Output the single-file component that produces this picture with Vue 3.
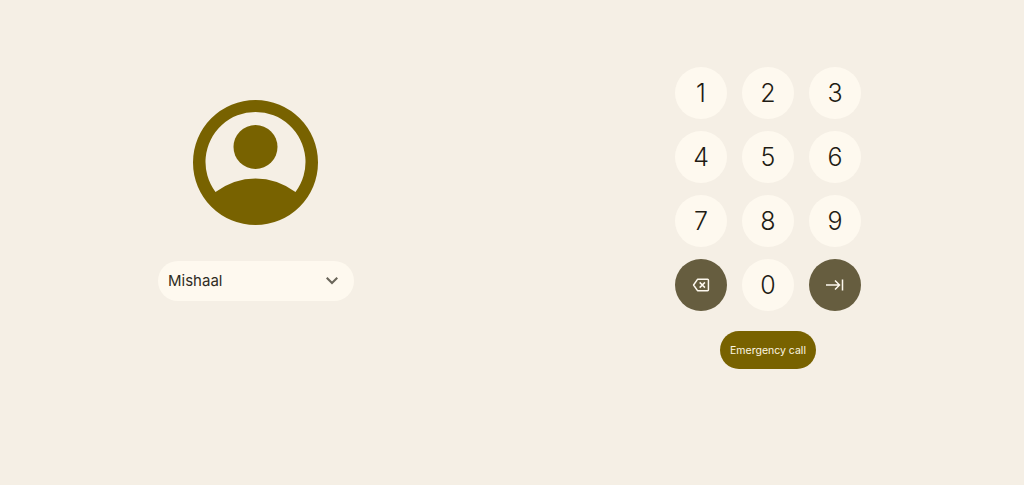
<script setup>
const keys = ['1','2','3','4','5','6','7','8','9']
</script>

<template>
  <main class="screen">
    <section class="left">
      <svg class="avatar" viewBox="0 0 125 125" aria-label="User avatar">
        <path fill="#786200" fill-rule="evenodd" d="M62.5 0a62.5 62.5 0 1 0 0 125a62.5 62.5 0 1 0 0-125z M22.5 92A50 50 0 1 1 102.5 92Q84 78.5 62.5 78.5Q41 78.5 22.5 92z" />
        <circle cx="62.5" cy="47" r="22" fill="#786200" />
      </svg>
      <div class="select">
        <span>Mishaal</span>
        <svg class="chev" viewBox="0 0 16 10"><path d="M2 1.8l6 6 6-6" fill="none" stroke="#6a665a" stroke-width="2.4" /></svg>
      </div>
    </section>
    <section class="right">
      <div class="pad">
        <button v-for="k in keys" :key="k" class="key">{{ k }}</button>
        <button class="key dark" aria-label="Backspace">
          <svg class="icon" viewBox="0 0 20 16">
            <path d="M6 1.5h11.5a1 1 0 0 1 1 1v11a1 1 0 0 1-1 1H6L1.5 8z" fill="none" stroke="#fef9ef" stroke-width="1.7" stroke-linejoin="round"/>
            <path d="M8.5 5l6 6M14.5 5l-6 6" fill="none" stroke="#fef9ef" stroke-width="1.7"/>
          </svg>
        </button>
        <button class="key">0</button>
        <button class="key dark" aria-label="Enter">
          <svg class="icon wide" viewBox="0 0 18 12">
            <path d="M0 6h13M9 1.5L13.5 6 9 10.5M16.5 0.5v11" fill="none" stroke="#fef9ef" stroke-width="1.5"/>
          </svg>
        </button>
      </div>
      <button class="call">Emergency call</button>
    </section>
  </main>
</template>

<style scoped>
.screen {
  display: flex;
  width: 1024px;
  height: 485px;
  background: #f5efe5;
  font-family: "Inter", "Noto Sans", sans-serif;
  color: #2f2c23;
  overflow: hidden;
}
.left, .right {
  width: 512px;
  display: flex;
  flex-direction: column;
  align-items: center;
}
.left { padding-top: 100px; }
.right { padding-top: 67px; }
.avatar { width: 125px; height: 125px; display: block; margin-right: 1px; }
.select {
  width: 196px;
  height: 40px;
  box-sizing: border-box;
  margin-top: 36px;
  padding: 0 15px 2px 10px;
  border-radius: 20px;
  background: #fef9ef;
  display: flex;
  align-items: center;
  justify-content: space-between;
  font-size: 15px;
}
.chev { width: 14px; height: 9px; }
.pad {
  display: grid;
  grid-template-columns: repeat(3, 52px);
  grid-auto-rows: 52px;
  column-gap: 15px;
  row-gap: 12px;
}
.key {
  border: 0;
  padding: 0;
  border-radius: 50%;
  background: #fef9ef;
  color: #1f1c14;
  font-family: "Inter", sans-serif;
  font-weight: 350;
  font-size: 25px;
  display: flex;
  align-items: center;
  justify-content: center;
}
.dark { background: #665d3f; }
.icon { width: 18px; height: 14px; }
.icon.wide { width: 18px; height: 12px; }
.call {
  margin-top: 20px;
  width: 96px;
  height: 38px;
  border: 0;
  padding: 0;
  border-radius: 19px;
  background: #786200;
  color: #fdf6e3;
  font-family: "Inter", sans-serif;
  font-size: 10.5px;
}
</style>
